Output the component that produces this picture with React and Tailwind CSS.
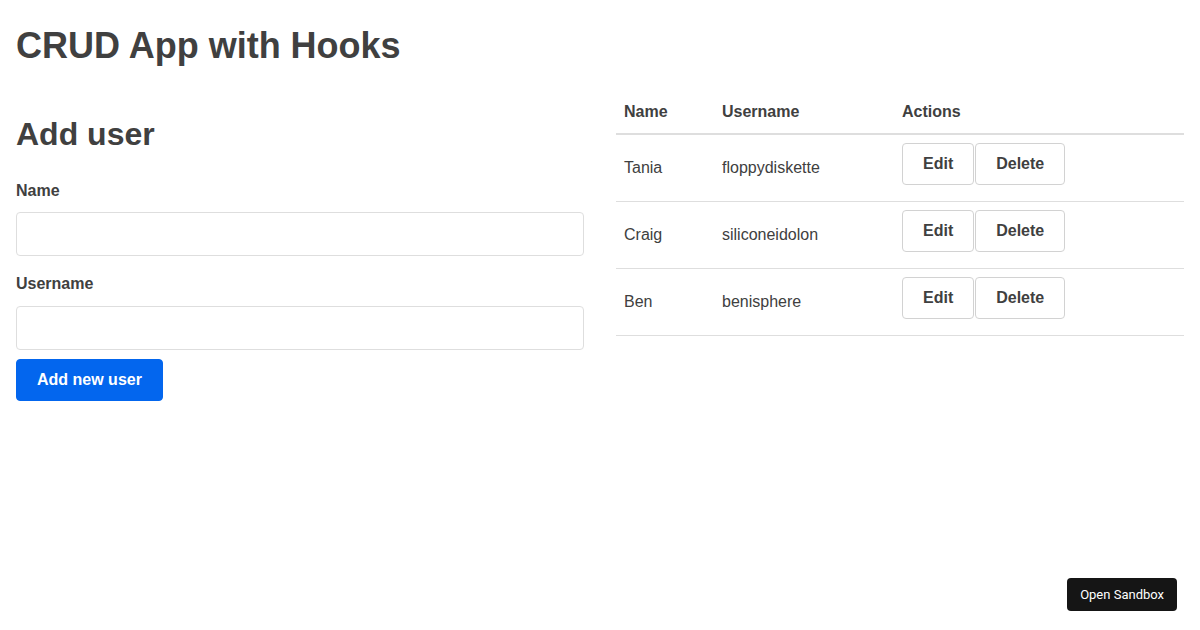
const users = [
  { id: 1, name: 'Tania', username: 'floppydiskette' },
  { id: 2, name: 'Craig', username: 'siliconeidolon' },
  { id: 3, name: 'Ben', username: 'benisphere' },
];

const App = () => {
  return (
    <div className="relative min-h-[630px] bg-white px-4 pt-6 text-[#404040] font-['Liberation_Sans',Arial,sans-serif]">
      <h1 className="text-[36px] font-bold leading-[44px]">CRUD App with Hooks</h1>

      <div className="mt-[21px] flex gap-8">
        {/* Add user form */}
        <div className="w-[568px]">
          <h2 className="mt-[25px] mb-[25px] text-[32px] font-bold leading-[40px]">Add user</h2>
          <form>
            <label className="mb-[9px] block text-base font-bold leading-6">Name</label>
            <input
              type="text"
              className="mb-4 block h-[44px] w-full rounded border border-[#dedede] bg-white px-3 text-base outline-none"
            />
            <label className="mb-[10px] block text-base font-bold leading-6">Username</label>
            <input
              type="text"
              className="mb-[9px] block h-[44px] w-full rounded border border-[#dedede] bg-white px-3 text-base outline-none"
            />
            <button
              type="button"
              className="block h-[42px] rounded border border-[#0366ee] bg-[#0366ee] px-5 text-base font-bold leading-6 text-white"
            >
              Add new user
            </button>
          </form>
        </div>

        {/* Users table */}
        <div className="w-[568px]">
          <table className="w-full border-collapse text-left text-base leading-6">
            <thead>
              <tr className="border-b-2 border-[#dedede]">
                <th className="w-[98px] px-2 pt-[11px] pb-[9px] font-bold">Name</th>
                <th className="w-[180px] px-2 pt-[11px] pb-[9px] font-bold">Username</th>
                <th className="px-2 pt-[11px] pb-[9px] font-bold">Actions</th>
              </tr>
            </thead>
            <tbody>
              {users.map(user => (
                <tr key={user.id} className="border-b border-[#dedede]">
                  <td className="px-2 py-2 align-middle">{user.name}</td>
                  <td className="px-2 py-2 align-middle">{user.username}</td>
                  <td className="px-2 py-2 align-top">
                    <div className="mb-2 flex">
                      <button className="h-[42px] rounded border border-[#d2d2d2] bg-white px-5 font-bold text-[#404040]">
                        Edit
                      </button>
                      <button className="ml-px h-[42px] rounded border border-[#d2d2d2] bg-white px-5 font-bold text-[#404040]">
                        Delete
                      </button>
                    </div>
                  </td>
                </tr>
              ))}
            </tbody>
          </table>
        </div>
      </div>

      <button className="absolute right-[23px] bottom-[19px] h-[33px] rounded bg-[#151515] px-[13px] text-[13px] text-white font-['Roboto',sans-serif]">
        Open Sandbox
      </button>
    </div>
  );
};

export default App;
